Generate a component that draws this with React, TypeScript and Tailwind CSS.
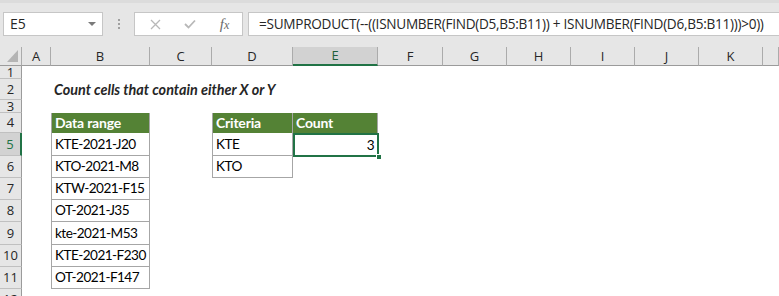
import React from "react";

const cols = ["A", "B", "C", "D", "E", "F", "G", "H", "I", "J", "K", ""];
const dataRange = [
  "KTE-2021-J20",
  "KTO-2021-M8",
  "KTW-2021-F15",
  "OT-2021-J35",
  "kte-2021-M53",
  "KTE-2021-F230",
  "OT-2021-F147",
];

const cellFont =
  "whitespace-nowrap font-['Lato','Liberation_Sans',sans-serif] text-[13.6px] tracking-[-0.55px] text-black";
const border = "border-[#a6a6a6]";

function RowHeader({ n, active, cut }: { n: string; active?: boolean; cut?: boolean }) {
  if (cut) {
    return (
      <div className="overflow-hidden flex justify-center pt-[4px] bg-[#e6e6e6] border-r border-r-[#9b9b9b] text-[#262626] font-['Open_Sans',sans-serif] text-[13px] leading-none">
        {n}
      </div>
    );
  }
  return (
    <div
      className={
        active
          ? "flex items-center justify-center bg-[#d2d2d2] border-b border-b-[#c0c0c0] border-r-2 border-r-[#217346] text-[#217346] font-['Open_Sans',sans-serif] text-[13px] leading-none"
          : "flex items-center justify-center bg-[#e6e6e6] border-b border-b-[#c0c0c0] border-r border-r-[#9b9b9b] text-[#262626] font-['Open_Sans',sans-serif] text-[13px] leading-none"
      }
    >
      {n}
    </div>
  );
}

function Empty() {
  return <div />;
}

export default function App() {
  const rows: React.ReactNode[] = [];

  rows.push(
    <div
      key="corner"
      className="relative bg-[#e6e6e6] border-b border-b-[#9b9b9b] border-r border-r-[#ababab]"
    >
      <svg className="absolute left-0 top-0" width="22" height="19" viewBox="0 0 22 19">
        <polygon points="7,15 18,15 18,3" fill="#b4b4b4" />
      </svg>
    </div>
  );
  cols.forEach((c) => {
    rows.push(
      <div
        key={"h" + c}
        className={
          c === "E"
            ? "flex items-center justify-center bg-[#d2d2d2] border-b-2 border-b-[#217346] border-r border-r-[#ababab] text-[#1e5e3a] font-['Open_Sans',sans-serif] text-[13px] leading-none"
            : "flex items-center justify-center bg-[#e6e6e6] border-b border-b-[#9b9b9b] border-r border-r-[#ababab] text-[#262626] font-['Open_Sans',sans-serif] text-[13px] leading-none"
        }
      >
        {c}
      </div>
    );
  });

  rows.push(<RowHeader key="r1" n="1" />);
  cols.forEach((c) => rows.push(<Empty key={"1" + c} />));

  rows.push(<RowHeader key="r2" n="2" />);
  cols.forEach((c) =>
    rows.push(
      c === "B" ? (
        <div key={"2" + c} className="relative">
          <div className="absolute left-[3px] bottom-[3px] whitespace-nowrap font-['Lato','Liberation_Sans',sans-serif] text-[14.4px] font-bold italic text-[#262626] leading-none">
            Count cells that contain either X or Y
          </div>
        </div>
      ) : (
        <Empty key={"2" + c} />
      )
    )
  );

  rows.push(<RowHeader key="r3" n="3" />);
  cols.forEach((c) => rows.push(<Empty key={"3" + c} />));

  rows.push(<RowHeader key="r4" n="4" />);
  cols.forEach((c) => {
    if (c === "B" || c === "D" || c === "E") {
      const label = c === "B" ? "Data range" : c === "D" ? "Criteria" : "Count";
      rows.push(
        <div
          key={"4" + c}
          className={
            c === "E"
              ? "flex items-end pb-[3px] pl-[3px] bg-[#548235] border-r border-r-[#a6a6a6] whitespace-nowrap font-['Lato','Liberation_Sans',sans-serif] text-[14px] tracking-[-0.2px] font-bold text-white leading-none"
              : "flex items-end pb-[3px] pl-[3px] bg-[#548235] border-l border-l-[#a6a6a6] border-r border-r-[#a6a6a6] whitespace-nowrap font-['Lato','Liberation_Sans',sans-serif] text-[14px] tracking-[-0.2px] font-bold text-white leading-none"
          }
        >
          {label}
        </div>
      );
    } else rows.push(<Empty key={"4" + c} />);
  });

  dataRange.forEach((v, i) => {
    const n = i + 5;
    rows.push(<RowHeader key={"r" + n} n={String(n)} active={n === 5} />);
    cols.forEach((c) => {
      if (c === "B") {
        rows.push(
          <div
            key={n + c}
            className={`flex items-end pb-[3px] pl-[3px] border-l border-r border-b ${border} ${cellFont} leading-none`}
          >
            {v}
          </div>
        );
      } else if (c === "D" && n <= 6) {
        rows.push(
          <div
            key={n + c}
            className={`flex items-end pb-[3px] pl-[3px] border-l border-r border-b ${border} ${cellFont} leading-none`}
          >
            {n === 5 ? "KTE" : "KTO"}
          </div>
        );
      } else if (c === "E" && n === 5) {
        rows.push(
          <div
            key={n + c}
            className={`relative flex items-end justify-end pb-[3px] pr-[4px] ${cellFont} leading-none`}
          >
            3
            <div className="absolute left-0 top-0 right-[-1px] bottom-[-1px] border-2 border-[#217346]" />
            <div className="absolute right-[-4px] bottom-[-4px] w-[6px] h-[6px] bg-[#217346] border border-white" />
          </div>
        );
      } else rows.push(<Empty key={n + c} />);
    });
  });

  rows.push(<RowHeader key="r12" n="12" cut />);
  cols.forEach((c) => rows.push(<Empty key={"12" + c} />));

  return (
    <div className="w-[779px] h-[296px] overflow-hidden bg-white">
      <div className="h-[47px] bg-[#e6e6e6] border-t-[3px] border-t-[#dcdcdc] flex items-start pt-[9px] pl-[3px]">
        <div className="w-[100px] h-[24px] shrink-0 bg-white border border-[#c6c6c6] flex items-center justify-between pl-[6px] pr-[6px]">
          <span className="font-['Open_Sans',sans-serif] text-[14px] text-[#262626] leading-none">E5</span>
          <svg width="8" height="5" viewBox="0 0 8 5">
            <polygon points="0,0 8,0 4,4" fill="#7a7a7a" />
          </svg>
        </div>
        <div className="w-[31px] h-[24px] shrink-0 flex flex-col items-center justify-center gap-[2px]">
          <div className="w-[2px] h-[2px] bg-[#a0a0a0]" />
          <div className="w-[2px] h-[2px] bg-[#a0a0a0]" />
          <div className="w-[2px] h-[2px] bg-[#a0a0a0]" />
        </div>
        <div className="w-[109px] h-[24px] shrink-0 bg-white border border-[#c6c6c6] flex items-center">
          <div className="w-[38px] flex justify-center pl-[2px]">
            <svg width="11" height="11" viewBox="0 0 11 11">
              <path d="M1 1 L10 10 M10 1 L1 10" stroke="#b8b8b8" strokeWidth="1.3" fill="none" />
            </svg>
          </div>
          <div className="w-[34px] flex justify-center">
            <svg width="12" height="10" viewBox="0 0 12 10">
              <path d="M1 5 L4.5 8.5 L11 1.5" stroke="#b8b8b8" strokeWidth="1.8" fill="none" />
            </svg>
          </div>
          <div className="w-[35px] flex justify-center">
            <span className="font-['Liberation_Serif',serif] italic text-[15px] text-[#6a6a6a] leading-none">
              f<span className="text-[12px]">x</span>
            </span>
          </div>
        </div>
        <div className="ml-[5px] w-[600px] h-[24px] shrink-0 bg-white border border-[#c6c6c6] flex items-center pl-[10px]">
          <span className="whitespace-nowrap font-['Open_Sans',sans-serif] text-[13.6px] text-[#262626] leading-none tracking-[-0.28px]">
            =SUMPRODUCT(--((ISNUMBER(FIND(D5,B5:B11)) + ISNUMBER(FIND(D6,B5:B11)))&gt;0))
          </span>
        </div>
      </div>
      <div className="grid grid-cols-[22px_29px_99px_62px_81px_85px_65px_64px_64px_64px_64px_64px_16px] grid-rows-[19px_13px_21px_13px_20px_23px_22px_22px_22px_23px_22px_22px_7px]">
        {rows}
      </div>
    </div>
  );
}
